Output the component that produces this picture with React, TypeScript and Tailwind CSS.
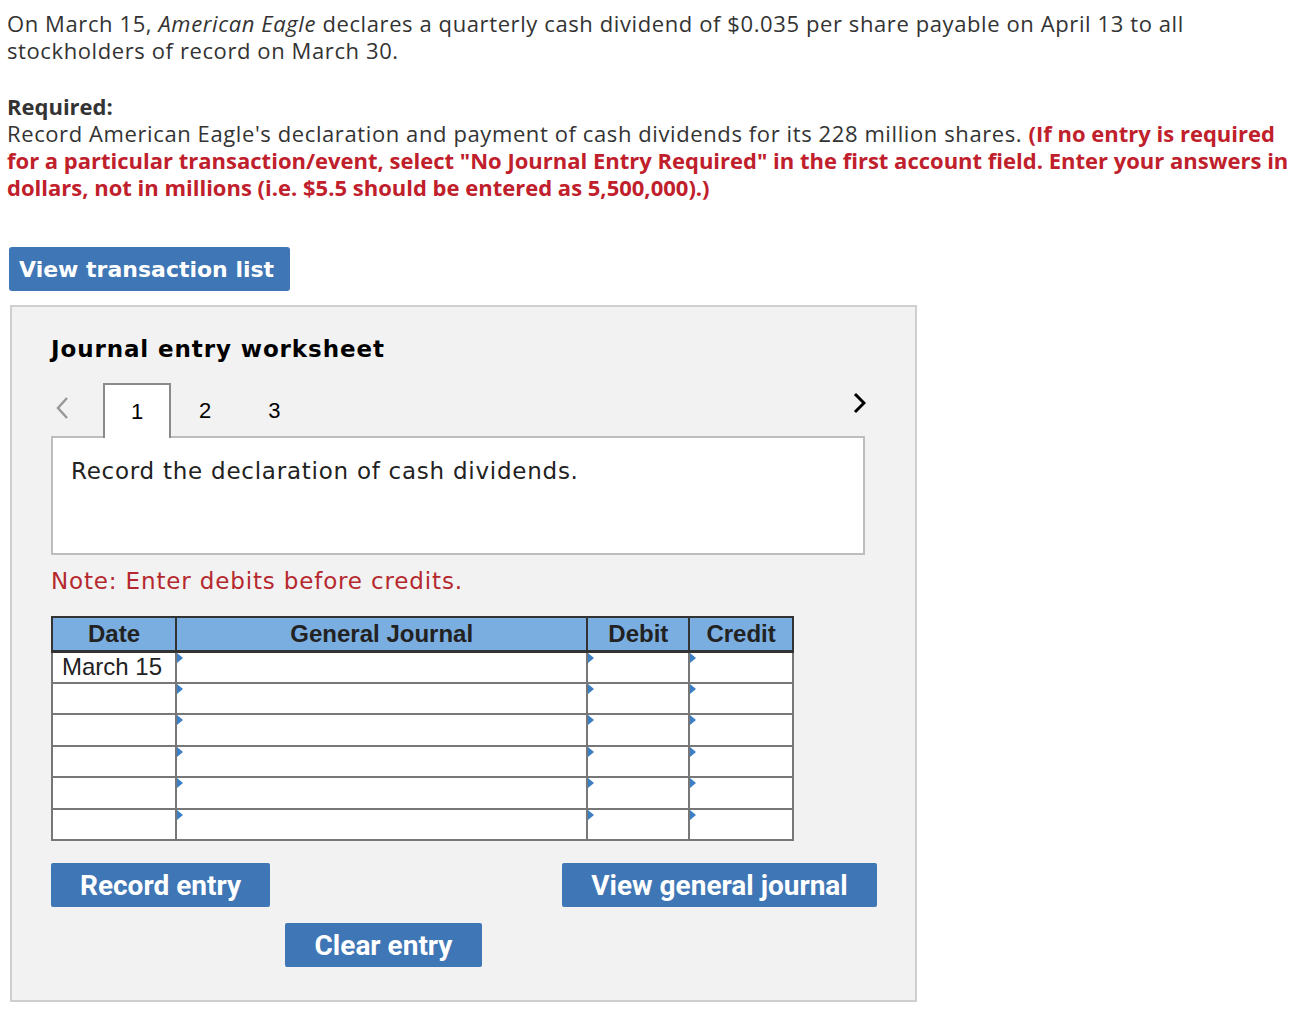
import React from "react";

const rows = ["March 15", "", "", "", "", ""];

function Marker() {
  // small blue triangle in the top-left corner of an input cell
  return (
    <span className="absolute left-0 top-0 h-0 w-0 border-y-[5px] border-l-[6px] border-y-transparent border-l-[#3b7fc4]" />
  );
}

export default function App() {
  return (
    <div className="min-h-[1024px] bg-white px-[7px] pt-[10px] font-['Open_Sans',sans-serif] text-[22px] leading-[27px] tracking-[0.6px] text-[#333] whitespace-nowrap">
      {/* Problem statement */}
      <p>
        On March 15, <i>American Eagle</i> declares a quarterly cash dividend of $0.035 per share payable on April 13 to all
        <br />
        stockholders of record on March 30.
      </p>

      <p className="mt-[29px] font-bold tracking-normal">Required:</p>
      <p>
        Record American Eagle's declaration and payment of cash dividends for its 228 million shares.{" "}
        <b className="tracking-normal text-[#c0202b]">
          (If no entry is required
          <br />
          for a particular transaction/event, select "No Journal Entry Required" in the first account field. Enter your answers in
          <br />
          dollars, not in millions (i.e. $5.5 should be entered as 5,500,000).)
        </b>
      </p>

      <button className="mt-[46px] ml-[2px] flex h-[44px] w-[281px] items-center rounded-[3px] bg-[#3f76b5] px-[10px] font-['DejaVu_Sans',sans-serif] text-[22px] font-bold tracking-normal text-white">
        View transaction list
      </button>

      {/* Worksheet panel */}
      <div className="mt-[14px] ml-[3px] w-[907px] border-2 border-[#cfcfcf] bg-[#f2f2f2] px-[39px] pb-[33px] pt-[26px] tracking-normal">
        <h2 className="font-['DejaVu_Sans',sans-serif] text-[23px] font-bold leading-[32px] tracking-[0.9px] text-black">
          Journal entry worksheet
        </h2>

        {/* Tabs */}
        <div className="mt-[16px] flex h-[55px] items-end">
          <span className="mb-[16px] ml-[4px] w-[48px] text-[#999]">
            <svg width="14" height="24" viewBox="0 0 14 24" fill="none" stroke="currentColor" strokeWidth="2.5">
              <path d="M12 2 L3 12 L12 22" />
            </svg>
          </span>
          <div className="relative top-[2px] flex h-[55px] w-[68px] items-center justify-center border-2 border-b-0 border-[#8a8a8a] bg-white font-['Liberation_Sans',sans-serif] text-[22px] text-black">
            1
          </div>
          <span className="mb-[12px] ml-[28px] font-['Liberation_Sans',sans-serif] text-[22px] text-black">2</span>
          <span className="mb-[12px] ml-[57px] font-['Liberation_Sans',sans-serif] text-[22px] text-black">3</span>
          <span className="mb-[21px] ml-auto mr-[4px] w-[20px] text-black">
            <svg width="14" height="24" viewBox="0 0 14 24" fill="none" stroke="currentColor" strokeWidth="3">
              <path d="M3 3 L12 12 L3 21" />
            </svg>
          </span>
        </div>

        <div className="h-[119px] w-[814px] border-2 border-[#bdbdbd] bg-white px-[18px] pt-[18px] font-['DejaVu_Sans',sans-serif] text-[23px] leading-[30px] tracking-[0.75px] text-[#222]">
          Record the declaration of cash dividends.
        </div>

        <p className="mt-[11px] font-['DejaVu_Sans',sans-serif] text-[23px] leading-[30px] tracking-[0.85px] text-[#b5282e]">
          Note: Enter debits before credits.
        </p>

        {/* Journal table */}
        <table className="mt-[20px] w-[743px] border-collapse border-2 border-[#777] font-['Liberation_Sans',sans-serif] text-[24px] leading-[26px]">
          <thead>
            <tr className="h-[34px] bg-[#7aaee0] text-[#222]">
              <th className="w-[124px] border-2 border-b-[3px] border-[#333] font-bold">Date</th>
              <th className="w-[413px] border-2 border-b-[3px] border-[#333] font-bold">General Journal</th>
              <th className="w-[102px] border-2 border-b-[3px] border-[#333] font-bold">Debit</th>
              <th className="w-[104px] border-2 border-b-[3px] border-[#333] font-bold">Credit</th>
            </tr>
          </thead>
          <tbody>
            {rows.map((d, i) => (
              <tr key={i} className="h-[31.5px] bg-white">
                <td className="border-2 border-[#777] px-[9px] text-[#222]">{d}</td>
                <td className="relative border-2 border-[#777]">
                  <Marker />
                </td>
                <td className="relative border-2 border-[#777]">
                  <Marker />
                </td>
                <td className="relative border-2 border-[#777]">
                  <Marker />
                </td>
              </tr>
            ))}
          </tbody>
        </table>

        {/* Actions */}
        <div className="mt-[22px] flex w-[826px] justify-between">
          <button className="h-[44px] w-[219px] rounded-[2px] bg-[#3f76b5] font-['Roboto',sans-serif] text-[28px] font-bold text-white">
            Record entry
          </button>
          <button className="h-[44px] w-[315px] rounded-[2px] bg-[#3f76b5] font-['Roboto',sans-serif] text-[28px] font-bold text-white">
            View general journal
          </button>
        </div>
        <div className="mt-[16px] flex justify-start pl-[234px]">
          <button className="h-[44px] w-[197px] rounded-[2px] bg-[#3f76b5] font-['Roboto',sans-serif] text-[28px] font-bold text-white">
            Clear entry
          </button>
        </div>
      </div>
    </div>
  );
}
